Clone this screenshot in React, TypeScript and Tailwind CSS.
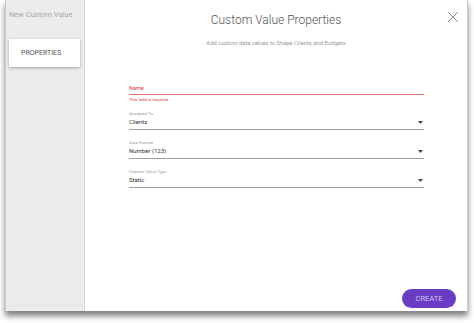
import React from "react";

const Caret = () => (
  <svg width="5" height="3" viewBox="0 0 5 3" className="mr-[1px] mt-[4px]">
    <path d="M0 0 L5 0 L2.5 3 Z" fill="#444" />
  </svg>
);

function SelectField({ label, value }: { label: string; value: string }) {
  return (
    <div className="flex flex-col">
      <div className="h-[6px] text-[4.4px] leading-[6px] text-[#9a9a9a]">{label}</div>
      <div className="box-content flex h-[12px] items-start justify-between border-b border-[#9e9e9e]">
        <span className="text-[6px] leading-[10px] text-[#333]">{value}</span>
        <Caret />
      </div>
    </div>
  );
}

export default function App() {
  return (
    <div
      className="h-[323px] w-[474px] bg-white"
      style={{ fontFamily: "Roboto, 'Liberation Sans', sans-serif" }}
    >
      <div className="ml-[5px] flex h-[311px] w-[463px] border-l border-r border-[#c9c9c9] bg-white shadow-[0_5px_6px_rgba(0,0,0,0.5)]">
        <aside className="flex w-[79px] flex-col border-r border-[#d4d4d4] bg-[#ececec]">
          <div className="pl-[3px] pt-[10px] text-[7.5px] leading-[10px] text-[#a8a8a8]">
            New Custom Value
          </div>
          <div className="ml-[3px] mt-[19px] flex h-[28px] w-[71px] items-center bg-white pl-[12px] text-[7px] text-[#555] shadow-[0_1px_3px_rgba(0,0,0,0.3)]">
            PROPERTIES
          </div>
          <div className="flex-1" />
          <div className="mx-[1px] mb-[5px] border-b border-[#e2e2e2]" />
        </aside>
        <main className="relative flex flex-1 flex-col">
          <div className="flex justify-center pt-[12px]">
            <h1 className="text-[12px] font-light leading-[16px] text-[#555]">
              Custom Value Properties
            </h1>
          </div>
          <button className="absolute right-[8px] top-[11px] block">
            <svg width="12" height="12" viewBox="0 0 12 12" className="block">
              <path d="M1 1 L11 11 M11 1 L1 11" stroke="#8a8a8a" strokeWidth="1" />
            </svg>
          </button>
          <div className="mt-[12px] text-center text-[5.8px] leading-[7px] text-[#9a9a9a]">
            Add custom data values to Shape Clients and Budgets
          </div>
          <div className="ml-[44px] mr-[43px] mt-[35px] flex flex-col">
            <div className="flex flex-col">
              <div className="box-content h-[12px] border-b border-[#e57373] text-[5.5px] leading-[12px] text-[#e53935]">
                Name
              </div>
              <div className="mt-[2px] h-[6px] text-[4.4px] leading-[6px] text-[#e53935]">
                This field is required
              </div>
            </div>
            <div className="mt-[8px]">
              <SelectField label="Assigned To" value="Clients" />
            </div>
            <div className="mt-[10px]">
              <SelectField label="Data Format" value="Number (123)" />
            </div>
            <div className="mt-[10px]">
              <SelectField label="Custom Value Type" value="Static" />
            </div>
          </div>
          <div className="flex-1" />
          <div className="flex justify-end pb-[3px] pr-[11px]">
            <button className="flex h-[19px] w-[54px] items-center justify-center rounded-full bg-[#6a3cc3] text-[7.5px] text-[#cfc0f3]">
              CREATE
            </button>
          </div>
        </main>
      </div>
    </div>
  );
}
